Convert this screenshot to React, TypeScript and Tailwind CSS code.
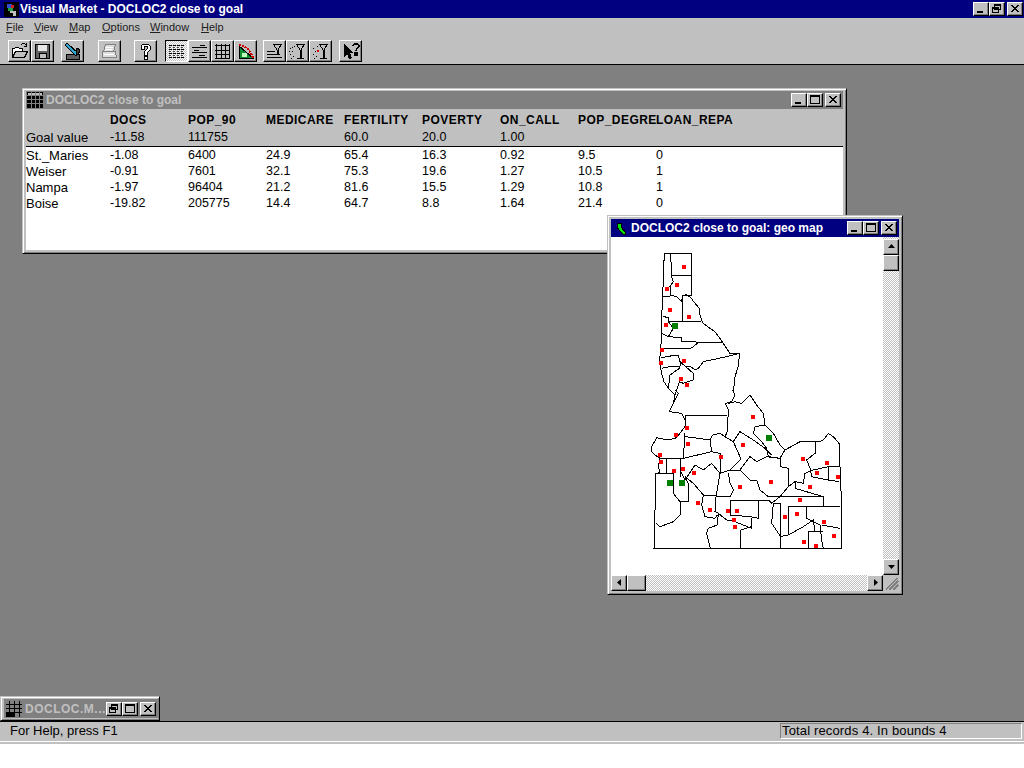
import React from "react";

const raised = "bg-[#c0c0c0] border-t border-l border-r border-b border-t-white border-l-white border-r-black border-b-black shadow-[inset_-1px_-1px_0_#808080]";

function Cap({ kind }: { kind: "min" | "max" | "close" | "restore" }) {
  return (
    <div className={`${raised} w-[16px] h-[14px] shrink-0 flex items-center justify-center`}>
      <svg width="14" height="12" viewBox="0 0 14 12" shapeRendering="crispEdges" fill="none" stroke="#000">
        {kind === "min" && <rect x="3" y="8" width="6" height="2" fill="#000" stroke="none" />}
        {kind === "max" && <path d="M2.5 1.5h9v8h-9zM2.5 2.5h9" />}
        {kind === "close" && <path d="M3 2l7 7M4 2l7 7M10 2l-7 7M11 2l-7 7" />}
        {kind === "restore" && <path d="M4.5 1.5h6v5h-6zM4.5 2.5h6M2.5 4.5h6v5h-6zM2.5 5.5h6" />}
      </svg>
    </div>
  );
}

function GridIcon() {
  return (
    <svg width="18" height="16" viewBox="0 0 18 16" shapeRendering="crispEdges" className="shrink-0">
      <rect x="1" y="0" width="16" height="16" fill="#000" />
      <path d="M1 3.500h16M1 7.500h16M1 11.500h16M5.500 0v16M9.500 0v16M13.500 0v16" stroke="#808080" />
      <path d="M2 1h3v2H2zM6 1h3v2H6zM10 1h3v2h-3zM14 1h2v2h-2z" fill="#c0c0c0" />
    </svg>
  );
}

const S = "#000";
const toolbarIcons: Record<string, React.ReactNode> = {
  open: (
    <g fill="none" stroke={S}>
      <path d="M2.500 6.500h2l1-1h3l1 1h3v9h-10z" fill="#fff" />
      <path d="M2.500 15.500l3-6h12l-3 6z" fill="#c0c0c0" />
      <path d="M11 3c2-2 4-2 5 0M16.500 1v3h-3" />
    </g>
  ),
  save: (
    <g>
      <path d="M2.500 2.500h14v14h-14z" fill="#606060" stroke={S} />
      <rect x="5" y="3" width="9" height="6" fill="#e8e8e8" />
      <rect x="6" y="11" width="7" height="5" fill="#c0c0c0" stroke={S} strokeWidth="1" />
    </g>
  ),
  edit: (
    <g>
      <path d="M3 12h13v5H3z" fill="#606060" stroke={S} />
      <path d="M2 3l2-2 11 10-2 3z" fill="#2fa8d0" stroke={S} />
      <path d="M14 6l3 2-2 5-2-2z" fill="#404040" stroke={S} />
    </g>
  ),
  print: (
    <g fill="none" stroke="#808080">
      <path d="M5.500 2.500h10l-2 7h-10z" fill="#dcdcdc" />
      <path d="M2.500 9.500h13l1 6h-14z" fill="#dcdcdc" />
      <path d="M6 5h7M5 7h7M4 12h10" stroke="#fff" />
    </g>
  ),
  help: (
    <g>
      <path d="M5 7V4l2-2h5l2 2v4l-3 3v2H8v-3l3-3V4H8v3z" fill="#fff" stroke={S} />
      <rect x="8" y="14" width="3" height="3" fill="#fff" stroke={S} />
    </g>
  ),
  dots: (
    <g fill={S}>
      {[3, 7, 11, 15].map((y) => [2, 6, 10, 14].map((x) => <rect key={x + "-" + y} x={x} y={y} width="3" height="1" />))}
      {[5, 9, 13].map((y) => [2, 6, 10, 14].map((x) => <rect key={x + "-" + y} x={x} y={y} width="2" height="1" fill="#404040" />))}
    </g>
  ),
  lines: <path d="M2 5.500h15M10 3.500h5M2 10.500h15M4 8.500h5M2 15.500h15M9 13.500h6" stroke={S} fill="none" />,
  grid: <path d="M2 3.500h15M2 8.500h15M2 12.500h15M2 16.500h15M3.500 2v15M8.500 2v15M12.500 2v15M16.500 2v15" stroke={S} strokeWidth="1" fill="none" />,
  pie: (
    <g>
      <path d="M3 4L17 16H3z" fill="#108f30" stroke={S} />
      <path d="M3 3c6 0 12 6 14 13" fill="none" stroke="#d00000" strokeWidth="2" strokeDasharray="2 1" />
      <path d="M6 11h5v4H6z" fill="#c0ffc0" />
    </g>
  ),
  f1: (
    <g fill="none" stroke={S}>
      <path d="M8 2.500h9M9 3l3 5v4M16 3l-3 5v4" />
      <path d="M2 12.500h13M2 15.500h15M2 9.500h8" />
    </g>
  ),
  f2: (
    <g fill="none" stroke={S}>
      <path d="M8 2.500h9M9 3l3 5v8M16 3l-3 5v8M9 16.500h7" />
      <path d="M2 6h1M4 9h1M2 12h1M5 14h1M3 16h1M6 4h1M1 9h1M4 5h1" strokeDasharray="1 1" />
    </g>
  ),
  f3: (
    <g fill="none" stroke={S}>
      <path d="M8 2.500h9M9 3l3 5v8M16 3l-3 5v8M9 16.500h7" />
      <path d="M2 6h1M4 9h1M2 12h1M5 14h1M3 16h1M6 4h1" strokeDasharray="1 1" />
      <rect x="6" y="8" width="2" height="2" fill="#e00000" stroke="none" />
    </g>
  ),
  what: (
    <g>
      <path d="M3 2v13l3-3 2 5 3-1-2-5h4z" fill={S} />
      <path d="M12 4c0-3 6-3 6 0 0 2-3 2-3 5M14 11h2v2h-2z" fill="none" stroke={S} strokeWidth="1.500" />
    </g>
  ),
};

function ToolBtn({ name, pressed }: { name: string; pressed?: boolean }) {
  return (
    <div className={pressed
      ? "w-[23px] h-[22px] shrink-0 flex items-center justify-center border border-t-black border-l-black border-r-white border-b-white bg-[repeating-conic-gradient(#fff_0_25%,#c0c0c0_0_50%)] bg-[length:2px_2px]"
      : `${raised} w-[23px] h-[22px] shrink-0 flex items-center justify-center`}>
      <svg width="19" height="19" viewBox="0 0 19 19" shapeRendering="crispEdges">{toolbarIcons[name]}</svg>
    </div>
  );
}

const headers = ["", "DOCS", "POP_90", "MEDICARE", "FERTILITY", "POVERTY", "ON_CALL", "POP_DEGRE", "LOAN_REPA"];
const goal = ["Goal value", "-11.58", "111755", "", "60.0", "20.0", "1.00", "", ""];
const rows = [
  ["St._Maries", "-1.08", "6400", "24.9", "65.4", "16.3", "0.92", "9.5", "0"],
  ["Weiser", "-0.91", "7601", "32.1", "75.3", "19.6", "1.27", "10.5", "1"],
  ["Nampa", "-1.97", "96404", "21.2", "81.6", "15.5", "1.29", "10.8", "1"],
  ["Boise", "-19.82", "205775", "14.4", "64.7", "8.8", "1.64", "21.4", "0"],
];
const gridCols = "grid grid-cols-[84px_repeat(8,78px)] leading-none";

function Row({ cells, cls }: { cells: string[]; cls: string }) {
  return (
    <div className={`${gridCols} ${cls}`}>
      {cells.map((c, i) => (
        <div key={i} className={`whitespace-nowrap ${i === 0 ? "text-[13px]" : "text-[12.5px]"}`}>{c}</div>
      ))}
    </div>
  );
}

const north = [
  "M73,40L155,42L155,165L150,165L128,165L128,245",
  "M135,163L150,170L165,190L178,205L180,225L185,240L190,250L210,265L225,275L240,295L248,308L260,325L270,340L298,340L296,375L285,410L280,455",
  "M73,40L73,60L70,65L70,115L68,170L65,230L65,280L62,330L58,365L65,400L72,425L85,445L105,465L100,490L88,515",
  "M90,40L93,65L93,105L155,105",
  "M93,105L100,125L90,140L90,165L110,170L125,185L128,165",
  "M68,170L90,170",
  "M128,245L185,243",
  "M68,230L85,232L85,245L128,245",
  "M85,245L100,265L85,290L65,280",
  "M85,290L125,293L125,305L248,308",
  "M62,325L150,325L160,320L178,305",
  "M62,352L90,350L92,345L115,345L120,365L135,378L150,378L165,390L175,385L190,365L250,352L298,340",
  "M65,385L90,380L118,378",
  "M85,445L90,405L118,385L122,370",
  "M135,378L160,400L160,420L130,430L118,425L105,465",
];

const south = [
  "M278,0L285,15L275,35L265,38L255,40L265,60L262,125L255,140",
  "M105,0L115,10L100,40L88,65L125,70L135,90L135,110L120,130L105,145L85,150L50,143L35,170L35,185L45,195L60,205L55,230L60,248L48,250L42,475L605,475L605,350L597,160L580,140L565,130L550,150L540,155L480,155L435,180L420,165L400,130L375,105L370,70L350,45L330,15L305,40L285,35L265,40",
  "M135,75L262,75",
  "M135,75L135,110",
  "M135,130L130,205",
  "M135,140L175,145L210,150L218,135L240,130L255,140L280,155L300,200L300,210L270,240L240,250",
  "M210,150L215,185L130,205L120,205L120,260",
  "M60,205L120,205",
  "M78,205L78,250",
  "M48,250L100,250L100,310L120,335L145,335L145,280L135,260",
  "M120,240L135,270L165,225L190,240L215,220L240,250",
  "M215,185L240,190L240,250",
  "M280,155L300,125L340,150L375,175L395,195",
  "M375,105L345,110L340,130L365,155L380,175L385,200L420,205L420,230L445,235L445,290L420,320L385,320L360,300L350,270L330,270L300,240L270,240",
  "M300,240L330,200L350,215L380,200L420,205",
  "M435,180L420,205",
  "M265,250L270,280L280,300L270,320L228,320L240,250",
  "M228,320L225,365L235,370L232,405",
  "M135,260L160,280L190,315L228,315",
  "M190,315L185,345L195,380L225,385L232,375",
  "M120,335L120,375L100,395L60,410L48,400",
  "M270,330L355,330L355,385L330,380L270,375L270,330",
  "M235,370L260,390L285,395L335,415L335,385",
  "M232,405L205,415L200,430L210,470L215,478",
  "M302,475L302,420L335,410",
  "M355,330L385,330L395,340L420,320",
  "M420,475L420,340L400,340L395,400L420,437",
  "M420,320L550,320L550,350L600,350",
  "M445,290L465,275L490,280L495,250L520,240L565,230L597,230",
  "M465,275L465,295L550,320",
  "M445,350L600,350",
  "M445,350L445,435L420,440",
  "M445,435L490,410L520,390L525,425L505,425L505,475",
  "M500,350L500,385L540,405L545,450L550,475",
  "M525,425L548,425",
  "M545,405L600,415",
  "M565,232L565,270L597,275",
  "M510,235L515,260L565,270",
  "M525,155L525,190L500,210L510,235",
];

const redN = [[132,81],[111,135],[81,147],[90,210],[147,231],[78,255],[66,330],[63,369],[132,363],[123,417],[141,435]];
const greenN = [[105,258]];
const redS = [[339,81],[141,114],[108,135],[144,162],[309,165],[243,201],[60,195],[63,215],[102,243],[129,237],[162,249],[489,207],[561,219],[531,249],[594,261],[393,276],[300,291],[510,291],[480,330],[174,339],[210,360],[264,363],[291,363],[282,390],[285,411],[435,381],[471,372],[552,396],[582,438],[492,456],[528,468]];
const greenS = [[387,144],[90,279],[126,279]];

function MapGroup({ ox, oy, paths, red, green }: { ox: number; oy: number; paths: string[]; red: number[][]; green: number[][] }) {
  return (
    <g transform={`translate(${ox} ${oy}) scale(${1 / 3})`}>
      {paths.map((d, i) => <path key={i} d={d} fill="none" stroke="#000" strokeWidth="3" />)}
      {red.map(([x, y], i) => <rect key={i} x={x - 6} y={y - 6} width="12" height="12" fill="#ff0000" />)}
      {green.map(([x, y], i) => <rect key={i} x={x - 9} y={y - 9} width="18" height="18" fill="#008000" />)}
    </g>
  );
}

const dither = "bg-[repeating-conic-gradient(#c0c0c0_0_25%,#fff_0_50%)] bg-[length:2px_2px]";

function Arrow({ dir }: { dir: "up" | "down" | "left" | "right" }) {
  const d = { up: "M4 8h7L7.500 4z", down: "M4 5h7L7.500 9z", left: "M9 3v7L5 6.500z", right: "M6 3v7l4-3.500z" }[dir];
  return (
    <div className={`${raised} w-[16px] h-[16px] shrink-0 flex items-center justify-center`}>
      <svg width="14" height="14" viewBox="0 0 14 14"><path d={d} fill="#000" /></svg>
    </div>
  );
}

const sunkenWin = "bg-[#c0c0c0] border border-t-[#c0c0c0] border-l-[#c0c0c0] border-r-black border-b-black shadow-[inset_1px_1px_0_#fff,inset_-1px_-1px_0_#808080]";

export default function App() {
  return (
    <div className="w-[1024px] h-[768px] bg-white flex flex-col overflow-hidden text-black font-['Liberation_Sans',Arial,sans-serif]">
      <div className="h-[18px] bg-[#000080] flex items-center pl-[4px] pr-[1px] shrink-0">
        <svg width="15" height="15" viewBox="0 0 15 15" shapeRendering="crispEdges" className="shrink-0">
          <rect width="15" height="15" fill="#000" />
          <path d="M3 2h5v4H3z" fill="#3050d0" />
          <path d="M7 3h3v3H7z" fill="#d02020" />
          <path d="M4 6h5v3H4z" fill="#20a040" />
          <path d="M6 9h6v2H6zM9 11h3v3H9z" fill="#c0c0c0" />
        </svg>
        <span className="ml-[1px] text-white font-bold text-[12px] whitespace-nowrap">Visual Market - DOCLOC2 close to goal</span>
        <div className="ml-auto flex items-center">
          <Cap kind="min" /><Cap kind="restore" /><div className="w-[2px]" /><Cap kind="close" />
        </div>
      </div>

      <div className="h-[19px] bg-[#c0c0c0] flex items-center text-[11px] shrink-0 text-[#202020]">
        <span className="ml-[6px] w-[28px]"><u>F</u>ile</span>
        <span className="w-[35px]"><u>V</u>iew</span>
        <span className="w-[33px]"><u>M</u>ap</span>
        <span className="w-[48px]"><u>O</u>ptions</span>
        <span className="w-[51px]"><u>W</u>indow</span>
        <span><u>H</u>elp</span>
      </div>

      <div className="h-[28px] bg-[#c0c0c0] flex items-start pt-[3px] pl-[8px] border-b border-b-black shrink-0">
        <ToolBtn name="open" /><ToolBtn name="save" />
        <div className="w-[7px]" /><ToolBtn name="edit" />
        <div className="w-[14px]" /><ToolBtn name="print" />
        <div className="w-[13px]" /><ToolBtn name="help" />
        <div className="w-[8px]" /><ToolBtn name="dots" pressed /><ToolBtn name="lines" /><ToolBtn name="grid" /><ToolBtn name="pie" />
        <div className="w-[6px]" /><ToolBtn name="f1" /><ToolBtn name="f2" /><ToolBtn name="f3" />
        <div className="w-[7px]" /><ToolBtn name="what" />
      </div>

      <div className="relative h-[657px] bg-[#808080] border-b border-b-black shrink-0">
        {/* table window */}
        <div className={`absolute left-[22px] top-[23px] w-[825px] h-[166px] ${sunkenWin} pt-[2px] px-[3px] pb-[3px] flex flex-col`}>
          <div className="h-[18px] bg-[#808080] flex items-center shrink-0 pr-[2px]">
            <GridIcon />
            <span className="ml-[2px] text-[#c0c0c0] font-bold text-[12px] whitespace-nowrap">DOCLOC2 close to goal</span>
            <div className="ml-auto flex items-center">
              <Cap kind="min" /><Cap kind="max" /><div className="w-[2px]" /><Cap kind="close" />
            </div>
          </div>
          <div className="h-[38px] border-b border-b-black shrink-0">
            <div className={`${gridCols} h-[21px] items-center font-bold text-[12px] tracking-[0.45px]`}>
              {headers.map((h, i) => <div key={i} className="whitespace-nowrap">{h}</div>)}
            </div>
            <Row cells={goal} cls="h-[15px] items-center" />
          </div>
          <div className="flex-1 bg-white">
            {rows.map((r) => <Row key={r[0]} cells={r} cls="h-[16px] items-center" />)}
          </div>
        </div>

        {/* map window */}
        <div className={`absolute left-[607px] top-[150px] w-[296px] h-[380px] ${sunkenWin} p-[3px] flex flex-col`}>
          <div className="h-[18px] bg-[#000080] flex items-center shrink-0 pr-[2px] pl-[5px]">
            <svg width="10" height="13" viewBox="0 0 10 13" shapeRendering="crispEdges" className="shrink-0">
              <path d="M1 1h4l1 5 3 4v2H7L3 8 1 5z" fill="#00e000" stroke="#000" strokeWidth="1" />
            </svg>
            <span className="ml-[5px] text-white font-bold text-[12px] whitespace-nowrap">DOCLOC2 close to goal: geo map</span>
            <div className="ml-auto flex items-center">
              <Cap kind="min" /><Cap kind="max" /><div className="w-[2px]" /><Cap kind="close" />
            </div>
          </div>
          <div className="flex flex-1 min-h-0">
            <div className="w-[272px] bg-white">
              <svg width="272" height="338" viewBox="611 237 272 338" shapeRendering="crispEdges" className="block">
                <MapGroup ox={640} oy={240} paths={north} red={redN} green={greenN} />
                <MapGroup ox={640} oy={390} paths={south} red={redS} green={greenS} />
              </svg>
            </div>
            <div className={`w-[16px] flex flex-col pt-[2px] ${dither}`}>
              <Arrow dir="up" />
              <div className={`${raised} h-[16px] shrink-0`} />
              <div className="flex-1" />
              <Arrow dir="down" />
            </div>
          </div>
          <div className="h-[16px] flex shrink-0">
            <div className={`w-[272px] flex ${dither}`}>
              <Arrow dir="left" />
              <div className={`${raised} w-[19px] h-[16px] shrink-0`} />
              <div className="flex-1" />
              <Arrow dir="right" />
            </div>
            <div className="w-[16px] h-[16px] flex items-center justify-center">
              <svg width="16" height="16" viewBox="0 0 16 16" shapeRendering="crispEdges">
                <path d="M14.500 3L3 14.500M15 6L6 15M15 10L10 15" stroke="#808080" strokeWidth="1.500" fill="none" />
              </svg>
            </div>
          </div>
        </div>

        {/* minimized window */}
        <div className={`absolute left-0 bottom-0 w-[160px] h-[25px] ${sunkenWin} p-[2px] pl-[3px] flex`}>
          <div className="flex-1 bg-[#808080] flex items-center pl-[2px] pr-[2px]">
            <svg width="16" height="16" viewBox="0 0 16 16" shapeRendering="crispEdges" className="shrink-0">
              <path d="M0 3.500h16M0 7.500h16M0 11.500h16M3.500 0v16M8.500 0v16M13.500 0v16" stroke="#000" fill="none" />
              <path d="M0 12h8v4H0z" fill="#000" />
            </svg>
            <span className="ml-[3px] text-[#c0c0c0] font-bold text-[12px] tracking-[0.5px] whitespace-nowrap">DOCLOC.M...</span>
            <div className="ml-auto flex items-center">
              <Cap kind="restore" /><Cap kind="max" /><div className="w-[2px]" /><Cap kind="close" />
            </div>
          </div>
        </div>
      </div>

      <div className="h-[19px] bg-[#c0c0c0] shrink-0 flex items-start pt-[1px] text-[13px] leading-[15px]">
        <span className="ml-[10px]">For Help, press F1</span>
        <div className="ml-auto mr-[2px] w-[242px] h-[16px] border border-t-[#808080] border-l-[#808080] border-r-white border-b-white flex items-center pl-[1px] pb-[1px] whitespace-nowrap tracking-[0.15px]">
          Total records 4. In bounds 4
        </div>
      </div>
      <div className="h-[1px] bg-white shrink-0" />
      <div className="h-[2px] bg-[#c0c0c0] shrink-0" />
      <div className="flex-1 bg-white" />
    </div>
  );
}
